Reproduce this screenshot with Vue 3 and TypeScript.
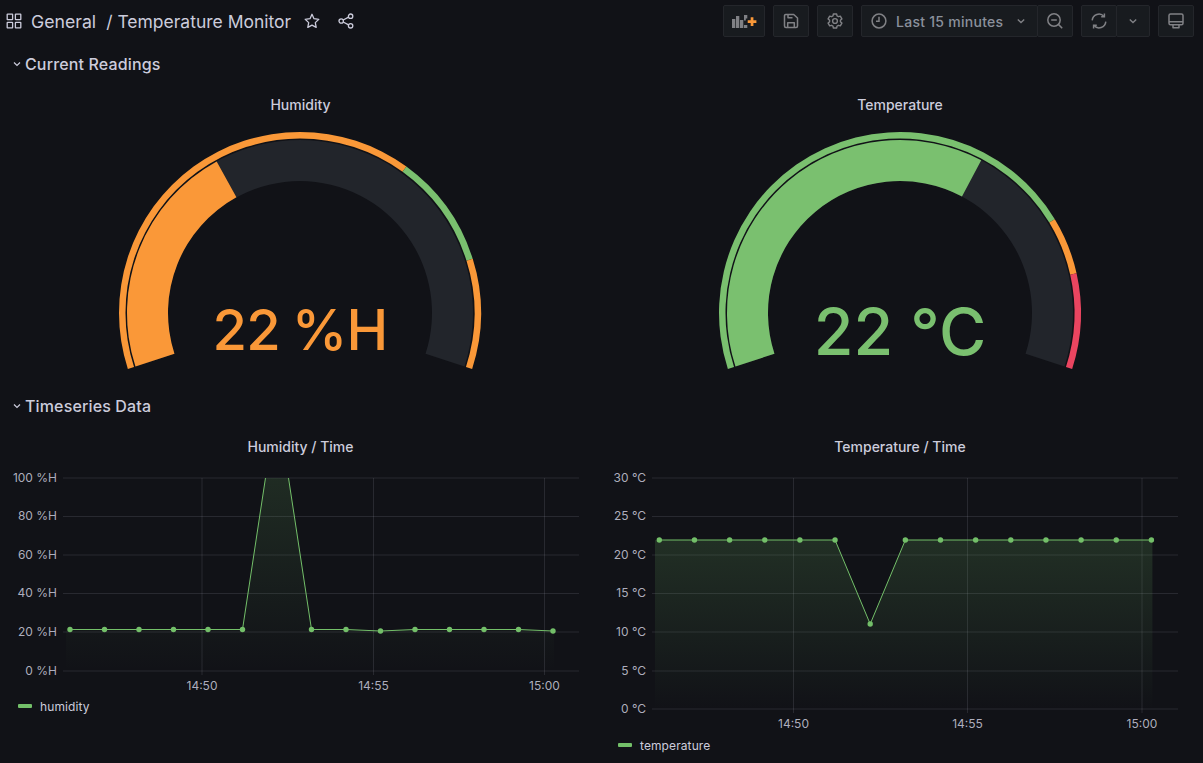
<script setup lang="ts">
interface Band { from: number; to: number; color: string }
interface Gauge { title: string; cx: number; value: string; color: string; fill: number; bands: Band[]; vb: string; size: string; baseline: number }

const START = 198
const SWEEP = 216
const CY = 313

function pt(cx: number, r: number, deg: number): string {
  // deg travelled clockwise from the gauge start
  const a = ((START - deg) * Math.PI) / 180
  return `${(cx + r * Math.cos(a)).toFixed(2)} ${(CY - r * Math.sin(a)).toFixed(2)}`
}
function arc(cx: number, outer: number, inner: number, a0: number, a1: number): string {
  const large = a1 - a0 > 180 ? 1 : 0
  return `M${pt(cx, outer, a0)}A${outer} ${outer} 0 ${large} 1 ${pt(cx, outer, a1)}L${pt(cx, inner, a1)}A${inner} ${inner} 0 ${large} 0 ${pt(cx, inner, a0)}Z`
}

const ORANGE = '#FA9838'
const GREEN = '#7AC06F'
const RED = '#EA4560'

const gauges: Gauge[] = [
  {
    title: 'Humidity', cx: 300, value: '22 %H', color: ORANGE, fill: 79.2, vb: '0 124 600 260', size: 'small', baseline: 350,
    bands: [
      { from: 0, to: 144, color: ORANGE },
      { from: 144, to: 180.6, color: GREEN },
      { from: 180.6, to: SWEEP, color: ORANGE },
    ],
  },
  {
    title: 'Temperature', cx: 900, value: '22 °C', color: GREEN, fill: 136, vb: '600 124 600 260', size: 'large', baseline: 355,
    bands: [
      { from: 0, to: 166.8, color: GREEN },
      { from: 166.8, to: 185.3, color: ORANGE },
      { from: 185.3, to: SWEEP, color: RED },
    ],
  },
]

interface Series {
  id: string; title: string; legend: string; vb: string; height: number
  x0: number; x1: number; gridTop: number; gridBottom: number
  labelX: number; fillX: number; gradTop: number; baseY: number
  ticks: { y: number; label: string }[]
  times: { x: number; label: string }[]
  timeY: number
  points: [number, number][]
}

const humY = [629.5, 629.5, 629.5, 629.5, 629.5, 629.5, 402, 629.5, 629.5, 631, 629.5, 629.5, 629.5, 629.5, 631]
const tempY = [540, 540, 540, 540, 540, 540, 624, 540, 540, 540, 540, 540, 540, 540, 540]

const charts: Series[] = [
  {
    id: 'hum', title: 'Humidity / Time', legend: 'humidity', vb: '0 466 600 230', height: 230,
    x0: 63, x1: 579, gridTop: 478, gridBottom: 671, labelX: 57, fillX: 66, gradTop: 450, baseY: 671,
    ticks: [
      { y: 478, label: '100 %H' }, { y: 516.5, label: '80 %H' }, { y: 555, label: '60 %H' },
      { y: 593.5, label: '40 %H' }, { y: 632, label: '20 %H' }, { y: 671, label: '0 %H' },
    ],
    times: [{ x: 202, label: '14:50' }, { x: 373.5, label: '14:55' }, { x: 544.5, label: '15:00' }],
    timeY: 690,
    points: humY.map((y, i) => [70 + 34.5 * i, y] as [number, number]),
  },
  {
    id: 'tmp', title: 'Temperature / Time', legend: 'temperature', vb: '600 466 600 269', height: 269,
    x0: 652, x1: 1178, gridTop: 478, gridBottom: 709, labelX: 646, fillX: 655, gradTop: 540, baseY: 709,
    ticks: [
      { y: 478, label: '30 °C' }, { y: 516.5, label: '25 °C' }, { y: 555, label: '20 °C' },
      { y: 593.5, label: '15 °C' }, { y: 632, label: '10 °C' }, { y: 671, label: '5 °C' }, { y: 709, label: '0 °C' },
    ],
    times: [{ x: 793.5, label: '14:50' }, { x: 967.5, label: '14:55' }, { x: 1142, label: '15:00' }],
    timeY: 728,
    points: tempY.map((y, i) => [659.3 + 35.15 * i, y] as [number, number]),
  },
]

function linePath(c: Series): string {
  return c.points.map((p, i) => `${i ? 'L' : 'M'}${p[0]} ${p[1]}`).join('')
}
function areaPath(c: Series): string {
  const first = c.points[0]
  const last = c.points[c.points.length - 1]
  return `M${c.fillX} ${first[1]}${c.points.map((p) => `L${p[0]} ${p[1]}`).join('')}L${last[0] + 1} ${last[1]}L${last[0] + 1} ${c.baseY}L${c.fillX} ${c.baseY}Z`
}
</script>

<template>
  <div class="page">
    <header class="toolbar">
      <div class="crumbs">
        <svg class="icon grid-icon" width="16" height="16" viewBox="0 0 16 16" fill="none" stroke="#ccccdc" stroke-width="1.3">
          <rect x="1.2" y="1.2" width="5.4" height="5.4" rx=".4" />
          <rect x="9.4" y="1.2" width="5.4" height="5.4" rx=".4" />
          <rect x="1.2" y="9.4" width="5.4" height="5.4" rx=".4" />
          <rect x="9.4" y="9.4" width="5.4" height="5.4" rx=".4" />
        </svg>
        <span class="crumb-folder">General</span>
        <span class="crumb-name">/ Temperature Monitor</span>
        <svg class="icon star" width="16" height="16" viewBox="0 0 16 16" fill="none" stroke="#ccccdc" stroke-width="1.3" stroke-linejoin="round">
          <path d="M8 1.3l2 4.4 4.8.6-3.5 3.3.9 4.8L8 12.1l-4.2 2.3.9-4.8L1.2 6.3 6 5.700z" />
        </svg>
        <svg class="icon share" width="16" height="16" viewBox="0 0 16 16" fill="none" stroke="#ccccdc" stroke-width="1.3">
          <circle cx="3.2" cy="8" r="2.2" />
          <circle cx="12.6" cy="3.2" r="2.2" />
          <circle cx="12.6" cy="12.8" r="2.2" />
          <path d="M5.2 7l5.4-2.8M5.2 9l5.4 2.8" />
        </svg>
      </div>
      <div class="actions">
        <button class="btn add">
          <svg width="26" height="16" viewBox="0 0 26 16">
            <path fill="#808185" d="M1 6h3.300v9H1zM5 3h3.300v12H5zM9 7h3.300v8H9zM13 2h3.300v3.500H14.800v2H13zM13 12h3.300v3H13z" />
            <path fill="#FA9838" d="M19.700 4.200h2.700v3h3v2.700h-3v3h-2.700v-3h-3V7.200h3z" />
          </svg>
        </button>
        <button class="btn square">
          <svg width="16" height="16" viewBox="0 0 16 16" fill="none" stroke="#808185" stroke-width="1.5" stroke-linejoin="round">
            <path d="M2.700 1.500h8l3.800 3.500v8a1.500 1.500 0 0 1-1.500 1.500H3A1.500 1.500 0 0 1 1.500 13V2.700a1.200 1.200 0 0 1 1.200-1.200z" />
            <path d="M4.700 14.300V9.800h6.600v4.500M5 1.800v3h4.500" />
          </svg>
        </button>
        <button class="btn square">
          <svg width="16" height="16" viewBox="0 0 16 16" fill="none" stroke="#808185" stroke-width="1.400" stroke-linejoin="round">
            <circle cx="8" cy="8" r="2.400" />
            <path d="M6.400 1h3.200l.5 2 1.300.7 1.900-.6 1.600 2.800-1.500 1.300v1.600l1.500 1.300-1.600 2.800-1.900-.6-1.300.7-.5 2H6.400l-.5-2-1.300-.7-1.900.6L1.100 10.100l1.500-1.300V7.200L1.100 5.900l1.600-2.800 1.900.6 1.300-.7z" />
          </svg>
        </button>
        <div class="btn-group">
          <button class="btn time">
            <svg width="16" height="16" viewBox="0 0 16 16" fill="none" stroke="#808185" stroke-width="1.500">
              <circle cx="8" cy="8" r="6.900" />
              <path d="M8 3.800v4.500H5" />
            </svg>
            <span class="time-label">Last 15 minutes</span>
            <svg class="chev" width="10" height="6" viewBox="0 0 10 6" fill="none" stroke="#808185" stroke-width="1.400">
              <path d="M1.800 1.500L5 4.500l3.200-3" />
            </svg>
          </button>
          <button class="btn square">
            <svg width="16" height="16" viewBox="0 0 16 16" fill="none" stroke="#808185" stroke-width="1.500">
              <circle cx="7" cy="7" r="6.200" />
              <path d="M4.200 7h5.600M11.400 11.400l3.800 3.800" />
            </svg>
          </button>
        </div>
        <div class="btn-group">
          <button class="btn square">
            <svg width="16" height="16" viewBox="0 0 16 16" fill="none" stroke="#808185" stroke-width="1.500">
              <path d="M1.200 7.400A6.800 6.800 0 0 1 13 3.400M14.800 8.600A6.800 6.800 0 0 1 3 12.600" />
              <path d="M13.400 .6v3.200h-3.200M2.600 15.400v-3.200h3.200" />
            </svg>
          </button>
          <button class="btn drop">
            <svg width="10" height="6" viewBox="0 0 10 6" fill="none" stroke="#808185" stroke-width="1.400">
              <path d="M1.800 1.500L5 4.500l3.200-3" />
            </svg>
          </button>
        </div>
        <button class="btn square">
          <svg width="16" height="16" viewBox="0 0 16 16" fill="none" stroke="#808185" stroke-width="1.500" stroke-linejoin="round">
            <rect x="1" y="1" width="14" height="10.800" rx="1.600" />
            <path d="M1 8.800h14M5 11.800v3h6v-3" />
          </svg>
        </button>
      </div>
    </header>

    <div class="row-head">
      <svg width="8" height="6" viewBox="0 0 8 6" fill="none" stroke="#ccccdc" stroke-width="1.200"><path d="M1 1.500l3 3 3-3" /></svg>
      <span>Current Readings</span>
    </div>
    <section class="panels">
      <div v-for="g in gauges" :key="g.title" class="panel">
        <div class="panel-title">{{ g.title }}</div>
        <svg class="plot" :viewBox="g.vb" height="260">
          <path :d="arc(g.cx, 173, 132, 0, SWEEP)" fill="#22252b" />
          <path :d="arc(g.cx, 173, 132, 0, g.fill)" :fill="g.color" />
          <path v-for="b in g.bands" :key="b.from" :d="arc(g.cx, 181, 174.5, b.from, b.to)" :fill="b.color" />
          <text class="gauge-value" :class="g.size" :x="g.cx" :y="g.baseline" :fill="g.color">{{ g.value }}</text>
        </svg>
      </div>
    </section>

    <div class="row-head">
      <svg width="8" height="6" viewBox="0 0 8 6" fill="none" stroke="#ccccdc" stroke-width="1.200"><path d="M1 1.500l3 3 3-3" /></svg>
      <span>Timeseries Data</span>
    </div>
    <section class="panels">
      <div v-for="c in charts" :key="c.id" class="panel">
        <div class="panel-title">{{ c.title }}</div>
        <svg class="plot" :viewBox="c.vb" :height="c.height">
          <defs>
            <linearGradient :id="`grad-${c.id}`" gradientUnits="userSpaceOnUse" x1="0" x2="0" :y1="c.gradTop" :y2="c.baseY">
              <stop offset="0" stop-color="#73BF69" stop-opacity=".17" />
              <stop offset="1" stop-color="#73BF69" stop-opacity="0" />
            </linearGradient>
            <clipPath :id="`clip-${c.id}`">
              <rect :x="c.x0 - 10" :y="c.gridTop" :width="c.x1 - c.x0 + 20" :height="c.gridBottom - c.gridTop + 10" />
            </clipPath>
          </defs>
          <line v-for="t in c.ticks" :key="t.y" :x1="c.x0" :x2="c.x1" :y1="t.y" :y2="t.y" class="grid" />
          <line v-for="t in c.times" :key="t.x" :x1="t.x" :x2="t.x" :y1="c.gridTop" :y2="c.gridBottom + 4" class="grid" />
          <g :clip-path="`url(#clip-${c.id})`">
            <path :d="areaPath(c)" :fill="`url(#grad-${c.id})`" />
            <path :d="linePath(c)" fill="none" stroke="#73BF69" stroke-width="1" />
            <circle v-for="p in c.points" :key="p[0]" :cx="p[0]" :cy="p[1]" r="2.700" fill="#73BF69" />
          </g>
          <text v-for="t in c.ticks" :key="t.label" class="tick-y" :x="c.labelX" :y="t.y + 3.500">{{ t.label }}</text>
          <text v-for="t in c.times" :key="t.label" class="tick-x" :x="t.x" :y="c.timeY">{{ t.label }}</text>
        </svg>
        <div class="legend"><i class="swatch"></i><span>{{ c.legend }}</span></div>
      </div>
    </section>
  </div>
</template>

<style>
html, body { margin: 0; background: #111217; overflow: hidden; }
</style>

<style scoped>
.page {
  width: 1203px;
  height: 763px;
  overflow: hidden;
  background: #111217;
  color: #ccccdc;
  font-family: Inter, "Liberation Sans", sans-serif;
}
.toolbar {
  height: 42px;
  display: flex;
  align-items: center;
  justify-content: space-between;
  padding: 0 9px 0 6px;
  box-sizing: border-box;
}
.crumbs { display: flex; align-items: center; }
.crumbs .icon { flex: none; }
.crumb-folder { font-size: 17.7px; margin-left: 9px; }
.crumb-name { font-size: 17.5px; margin-left: 10px; }
.star { margin-left: 13px; }
.share { margin-left: 18px; }
.actions { display: flex; align-items: center; gap: 8px; }
.btn {
  height: 32px;
  padding: 0;
  display: flex;
  align-items: center;
  justify-content: center;
  background: #181b1f;
  border: 1px solid #24262b;
  border-radius: 2px;
  box-sizing: border-box;
  font-family: inherit;
}
.add { width: 42px; }
.square { width: 36px; }
.btn-group { display: flex; }
.btn-group .btn + .btn { margin-left: -1px; }
.time { width: 177px; padding-left: 9px; justify-content: flex-start; }
.time-label { margin-left: 9px; font-size: 14px; font-weight: 500; letter-spacing: 0.27px; color: #8b919c; }
.chev { margin-left: 13px; }
.drop { width: 34px; }
.row-head {
  height: 44px;
  display: flex;
  align-items: center;
  padding-left: 13px;
  gap: 4px;
  font-size: 16px;
  font-weight: 500;
  letter-spacing: 0.14px;
  color: #ccccdc;
}
.panels { display: grid; grid-template-columns: 600px 600px; align-items: start; }
.panel { min-width: 0; }
.panel-title {
  height: 38px;
  line-height: 38px;
  text-align: center;
  font-size: 14px;
  font-weight: 500;
  color: #ccccdc;
}
.panel:first-child .panel-title { padding-left: 1px; }
.plot { display: block; width: 100%; }
.gauge-value { text-anchor: middle; font-weight: 500; font-family: Inter, "Liberation Sans", sans-serif; }
.gauge-value.small { font-size: 56px; letter-spacing: -0.9px; word-spacing: -2px; }
.gauge-value.large { font-size: 64.5px; }
.grid { stroke: rgba(204, 204, 220, 0.13); stroke-width: 1; }
.tick-y, .tick-x { font-size: 12px; fill: rgba(204, 204, 220, 0.85); font-family: Inter, "Liberation Sans", sans-serif; }
.tick-y { text-anchor: end; }
.tick-x { text-anchor: middle; }
.legend {
  height: 20px;
  display: flex;
  align-items: center;
  padding-left: 18px;
  font-size: 12px;
  letter-spacing: 0.1px;
  color: #ccccdc;
}
.swatch { width: 14px; height: 4px; border-radius: 1px; background: #73BF69; margin-right: 8px; }
</style>
